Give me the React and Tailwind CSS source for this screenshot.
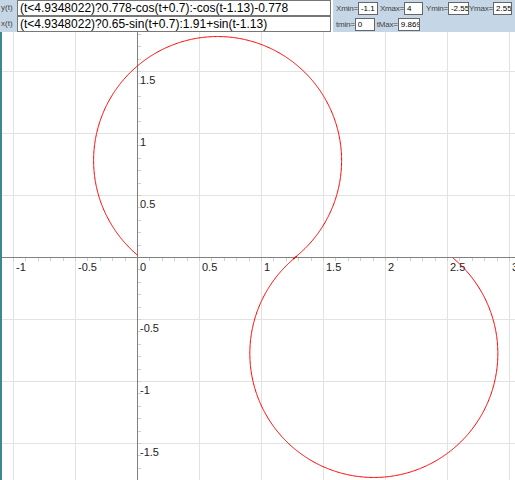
import React from 'react';

const OX = 137;
const OY = 257;
const S = 124;

function curvePoints() {
  const pts = [];
  for (let t = 0; t <= 9.869; t += 0.01) {
    let x, y;
    if (t < 4.9348022) {
      x = 0.65 - Math.sin(t + 0.7);
      y = 0.778 - Math.cos(t + 0.7);
    } else {
      x = 1.91 + Math.sin(t - 1.13);
      y = -Math.cos(t - 1.13) - 0.778;
    }
    pts.push(`${(OX + S * x).toFixed(2)},${(OY - S * y).toFixed(2)}`);
  }
  return pts.join(' ');
}

const xLabels = ['-1', '-0.5', '0', '0.5', '1', '1.5', '2', '2.5', '3'];
const yLabels = [
  { v: 1.5, t: '1.5' },
  { v: 1, t: '1' },
  { v: 0.5, t: '0.5' },
  { v: -0.5, t: '-0.5' },
  { v: -1, t: '-1' },
  { v: -1.5, t: '-1.5' },
];

function Field({ label, value }) {
  return (
    <div className="flex h-4">
      <div className="w-[17px] bg-[#c5d7e6] text-[8px] text-[#444] leading-4 pl-[1px]">{label}</div>
      <input
        readOnly
        value={value}
        className="w-[314px] h-4 border border-[#777] bg-white pl-[2px] text-[12px] text-black outline-none"
        style={{ fontFamily: '"Liberation Sans", Arial, sans-serif' }}
      />
    </div>
  );
}

function Small({ label, value, box }) {
  return (
    <div className="flex items-center">
      <span className="text-[8px] tracking-[-0.2px] text-[#444] whitespace-nowrap">{label}</span>
      <input
        readOnly
        value={value}
        className={`${box} h-[13px] border border-[#666] bg-white pl-[2px] text-[8px] text-black outline-none`}
      />
    </div>
  );
}

export default function App() {
  const xs = [];
  for (let k = -2; k <= 6; k++) xs.push(OX + 62 * k);
  const ys = [];
  for (let k = -4; k <= 4; k++) ys.push(OY - 62 * k);
  const ticksX = [];
  for (let k = -11; k <= 31; k++) ticksX.push(OX + 12.4 * k);
  const ticksY = [];
  for (let k = -18; k <= 18; k++) ticksY.push(OY - 12.4 * k);

  return (
    <div className="w-[515px] h-[480px] overflow-hidden bg-white" style={{ fontFamily: '"Liberation Sans", Arial, sans-serif' }}>
      <div className="flex h-8">
        <div className="flex flex-col w-[333px]">
          <Field label="y(t)" value="(t<4.9348022)?0.778-cos(t+0.7):-cos(t-1.13)-0.778" />
          <Field label="x(t)" value="(t<4.9348022)?0.65-sin(t+0.7):1.91+sin(t-1.13)" />
        </div>
        <div className="flex-1 bg-[#c5d7e6] flex flex-col gap-[3px] pt-[2px] pl-[3px]">
          <div className="flex">
            <Small label="Xmin=" value="-1.1" box="w-[20px] mr-[2px]" />
            <Small label="Xmax=" value="4" box="w-[19px] mr-[3px]" />
            <Small label="Ymin=" value="-2.55" box="w-[21px]" />
            <Small label="Ymax=" value="2.55" box="w-[19px]" />
          </div>
          <div className="flex">
            <Small label="tmin=" value="0" box="w-[20px] mr-[2px]" />
            <Small label="tMax=" value="9.869" box="w-[22px]" />
          </div>
        </div>
      </div>
      <div className="h-[448px] border-l-2 border-[#3d8795]">
        <svg width="513" height="448" viewBox="2 32 513 448" className="block">
          {xs.map((x) => (
            <line key={'gx' + x} x1={x + 0.5} y1={32} x2={x + 0.5} y2={480} stroke="#e2e2e2" strokeWidth="1" />
          ))}
          {ys.map((y) => (
            <line key={'gy' + y} x1={0} y1={y + 0.5} x2={515} y2={y + 0.5} stroke="#e2e2e2" strokeWidth="1" />
          ))}
          {ticksX.map((x) => (
            <line key={'tx' + x} x1={Math.round(x) + 0.5} y1={OY + 1} x2={Math.round(x) + 0.5} y2={OY + 4} stroke="#cfcfcf" />
          ))}
          {ticksY.map((y) => (
            <line key={'ty' + y} x1={OX + 1} y1={Math.round(y) + 0.5} x2={OX + 4} y2={Math.round(y) + 0.5} stroke="#cfcfcf" />
          ))}
          <line x1={0} y1={OY + 0.5} x2={515} y2={OY + 0.5} stroke="#808080" />
          <line x1={OX + 0.5} y1={32} x2={OX + 0.5} y2={480} stroke="#808080" />
          {xLabels.map((t, i) => (
            <text key={'lx' + t} x={OX + 62 * (i - 2) + 3} y={OY + 14} fontSize="11" fill="#222">
              {t}
            </text>
          ))}
          {yLabels.map((l) => (
            <text key={'ly' + l.t} x={OX + 3} y={OY - S * l.v + 13} fontSize="11" fill="#222">
              {l.t}
            </text>
          ))}
          <polyline points={curvePoints()} fill="none" stroke="#ff0000" strokeWidth="1" />
        </svg>
      </div>
    </div>
  );
}
